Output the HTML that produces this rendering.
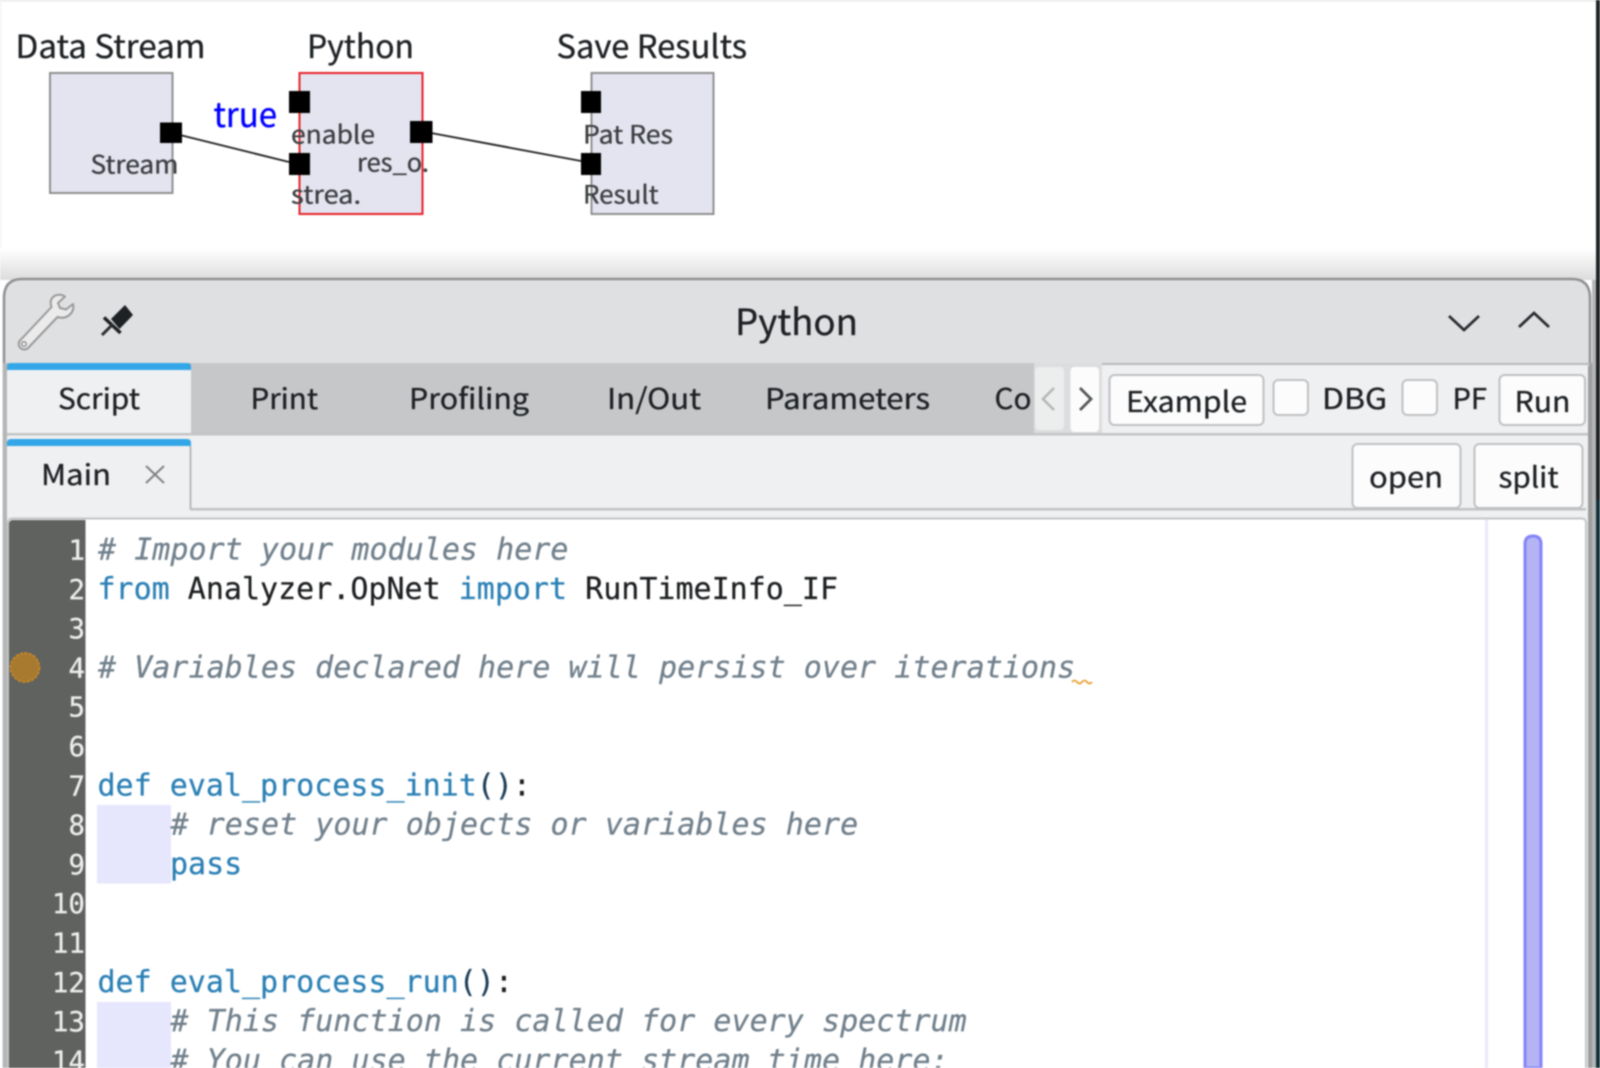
<!DOCTYPE html>
<html><head><meta charset="utf-8"><title>Python</title>
<style>
html,body{margin:0;padding:0;width:1600px;height:1068px;overflow:hidden;background:#fff}
svg{display:block;filter:blur(.75px)}
.u{font-family:"Noto Sans CJK JP","Liberation Sans",sans-serif;fill:#1f2225;stroke:#1f2225;stroke-width:.35px}
.m{font-family:"DejaVu Sans Mono","Liberation Mono",monospace;font-size:30px;white-space:pre;stroke-width:.25px}
.c{fill:#71808c;stroke:#71808c;font-style:italic;letter-spacing:.035px}
.k{fill:#2b80b5;stroke:#2b80b5}
.t{fill:#1d1f21;stroke:#1d1f21}
.n{font-family:"DejaVu Sans Mono","Liberation Mono",monospace;font-size:27.500px;fill:#eceeec;stroke:#eceeec;stroke-width:.25px;text-anchor:end}
.l{font-size:25px;fill:#3c3f42;stroke:#3c3f42}
.b{fill:#fcfcfc;stroke:#bfc1c3;stroke-width:2}
</style></head><body>
<svg width="1600" height="1068" viewBox="0 0 1600 1068" xmlns="http://www.w3.org/2000/svg">
<defs>
<linearGradient id="sh" x1="0" y1="0" x2="0" y2="1"><stop offset="0" stop-color="#fff"/><stop offset="1" stop-color="#dcdcdc"/></linearGradient>
<linearGradient id="ws" x1="0" y1="0" x2="1" y2="0"><stop offset="0" stop-color="#9c9c9c"/><stop offset="1" stop-color="#dfe0e2"/></linearGradient>
</defs>
<rect width="1600" height="1068" fill="#fff"/>
<rect width="1596" height="1.5" fill="#e8e8e8"/>
<rect width="1" height="278" fill="#eeeeee"/>
<rect x="0" y="248" width="1596" height="32" fill="url(#sh)"/>

<!-- graph -->
<text class="u" x="15.500" y="58" font-size="32" textLength="190" lengthAdjust="spacingAndGlyphs">Data Stream</text>
<text class="u" x="307" y="58" font-size="32" textLength="107" lengthAdjust="spacingAndGlyphs">Python</text>
<text class="u" x="556.500" y="58" font-size="32" textLength="190.500" lengthAdjust="spacingAndGlyphs">Save Results</text>
<rect x="50" y="73" width="122.500" height="120" fill="#e4e4f0" stroke="#8f8f8f" stroke-width="2"/>
<rect x="299.500" y="73" width="123" height="141" fill="#e4e4f0" stroke="#e8222a" stroke-width="2"/>
<rect x="591.500" y="73" width="122" height="141" fill="#e4e4f0" stroke="#8f8f8f" stroke-width="2"/>
<path d="M180 135L289 162M431 133L581 161" stroke="#222" stroke-width="1.900" fill="none"/>
<g fill="#000">
<rect x="160" y="122.500" width="22" height="20.500"/>
<rect x="289" y="91" width="21" height="22"/>
<rect x="289" y="153" width="21" height="22"/>
<rect x="410" y="121" width="22.500" height="22"/>
<rect x="581" y="91" width="20" height="22"/>
<rect x="581" y="153" width="20" height="22"/>
</g>
<text class="u" x="213.500" y="127" font-size="34" style="fill:#0000ff;stroke:#0000ff" textLength="63.500" lengthAdjust="spacingAndGlyphs">true</text>
<text class="u l" x="90.500" y="173.500" textLength="88" lengthAdjust="spacingAndGlyphs">Stream</text>
<text class="u l" x="291" y="143.500" textLength="84" lengthAdjust="spacingAndGlyphs">enable</text>
<text class="u l" x="357" y="171.500" textLength="72" lengthAdjust="spacingAndGlyphs">res_o.</text>
<text class="u l" x="291" y="203.500" textLength="70" lengthAdjust="spacingAndGlyphs">strea.</text>
<text class="u l" x="583" y="143.500" textLength="90" lengthAdjust="spacingAndGlyphs">Pat Res</text>
<text class="u l" x="583" y="203.500" textLength="75.500" lengthAdjust="spacingAndGlyphs">Result</text>

<!-- panel -->
<path d="M3 1068V298Q3 279 22 279H1572Q1591 279 1591 298V1068Z" fill="#eff0f1"/>
<path d="M4 363V298Q4 280 22 280H1572Q1590 280 1590 298V363Z" fill="#dfe0e2"/>
<path d="M4 1068V298Q4 279 22 279H1572Q1590 279 1590 298V1068" fill="none" stroke="#8f9192" stroke-width="2.500"/>
<rect x="3" y="363" width="4" height="705" fill="#b4b6b7"/>
<rect x="1588" y="363" width="4" height="705" fill="#9b9d9e"/>
<rect x="1592" y="280" width="4" height="788" fill="#b5b7b7"/>
<rect x="1596" y="0" width="4" height="500" fill="#1e2224"/>
<rect x="1596" y="500" width="4" height="568" fill="#123038"/>

<!-- wrench -->
<path d="M30 347H70" stroke="url(#ws)" stroke-width="3.500" fill="none"/>
<path d="M20.500 340L51.500 307C48.500 299 54 293.500 62 295L65 296.500L58 303L60 308L66 309.500L73 304C75 312.500 67 320 57.500 317L28 348A5 5 0 0 1 20.500 340Z" fill="#ebebeb" stroke="#9a9a9a" stroke-width="2" stroke-linejoin="round"/>
<circle cx="24" cy="344" r="2.200" fill="#fff" stroke="#8d8d8d" stroke-width="1.500"/>
<!-- pin -->
<path d="M125 305L133 315L119.500 329L111 319Z" fill="#1e2124"/>
<path d="M104 317.500L120.500 333" stroke="#1e2124" stroke-width="3.500" fill="none"/>
<path d="M113 324L102 335" stroke="#2a2d30" stroke-width="3" fill="none"/>

<text class="u" x="735" y="335" font-size="36" textLength="123" lengthAdjust="spacingAndGlyphs">Python</text>
<path d="M1449 316L1464 330L1479 316M1519 327L1534 313L1549 327" fill="none" stroke="#2a2d30" stroke-width="2.800"/>

<!-- tab bar -->
<rect x="7" y="363" width="1583" height="3" fill="#b6b8b9"/>
<rect x="191" y="363" width="843" height="70.500" fill="#c6c7c9"/>
<rect x="1034" y="363" width="68" height="71" fill="#dcdddf"/>
<rect x="1102" y="365" width="486" height="68" fill="#eff0f1"/>
<rect x="7" y="433" width="1581" height="2.500" fill="#c3c5c6"/>
<path d="M8 370V433H190.500V370Z" fill="#eff0f1"/>
<path d="M7 370V367Q7 363 11 363H187Q191 363 191 367V370Z" fill="#33a6e8"/>
<text class="u" x="58" y="409" font-size="28.500" textLength="82" lengthAdjust="spacingAndGlyphs">Script</text>
<text class="u" x="250.500" y="409" font-size="28.500" textLength="67.500" lengthAdjust="spacingAndGlyphs">Print</text>
<text class="u" x="409" y="409" font-size="28.500" textLength="120" lengthAdjust="spacingAndGlyphs">Profiling</text>
<text class="u" x="607" y="409" font-size="28.500" textLength="94" lengthAdjust="spacingAndGlyphs">In/Out</text>
<text class="u" x="765" y="409" font-size="28.500" textLength="165" lengthAdjust="spacingAndGlyphs">Parameters</text>
<text class="u" x="994.500" y="409" font-size="28.500" textLength="37" lengthAdjust="spacingAndGlyphs">Co</text>
<rect x="1035" y="367" width="29" height="63" rx="4" fill="#eceded"/>
<path d="M1054 388L1043 399L1054 410" fill="none" stroke="#b4b6b8" stroke-width="2.500"/>
<rect x="1070.500" y="367" width="28.500" height="65" rx="4" fill="#fcfcfc"/>
<path d="M1080 388L1091 399L1080 410" fill="none" stroke="#55585a" stroke-width="2.800"/>
<rect x="1109.500" y="375" width="154" height="50" rx="5" class="b"/>
<text class="u" x="1126" y="412" font-size="28.500" textLength="121" lengthAdjust="spacingAndGlyphs">Example</text>
<rect x="1273.500" y="380" width="34.500" height="35" rx="5" class="b"/>
<text class="u" x="1322" y="409" font-size="28.500" textLength="65" lengthAdjust="spacingAndGlyphs">DBG</text>
<rect x="1402.500" y="380" width="34.500" height="35" rx="5" class="b"/>
<text class="u" x="1452.500" y="409" font-size="28.500" textLength="34.500" lengthAdjust="spacingAndGlyphs">PF</text>
<rect x="1499.500" y="375" width="85.500" height="50" rx="5" class="b"/>
<text class="u" x="1514.500" y="412" font-size="28.500" textLength="56" lengthAdjust="spacingAndGlyphs">Run</text>

<!-- second row -->
<rect x="191" y="508" width="1395" height="2.500" fill="#c0c2c3"/>
<path d="M8 446V517H190V446Z" fill="#eff0f1"/>
<path d="M7 446V443Q7 439 11 439H187Q191 439 191 443V446Z" fill="#33a6e8"/>
<rect x="189.500" y="446" width="2" height="64" fill="#b8babc"/>
<text class="u" x="41" y="485" font-size="28.500" textLength="70" lengthAdjust="spacingAndGlyphs">Main</text>
<path d="M146 466L164 483M164 466L146 483" stroke="#808284" stroke-width="2" fill="none"/>
<rect x="1352.500" y="444" width="108" height="64" rx="5" class="b"/>
<text class="u" x="1369" y="487.500" font-size="28.500" textLength="74" lengthAdjust="spacingAndGlyphs">open</text>
<rect x="1474.500" y="444" width="108" height="64" rx="5" class="b"/>
<text class="u" x="1498.500" y="487.500" font-size="28.500" textLength="60" lengthAdjust="spacingAndGlyphs">split</text>

<!-- editor -->
<rect x="8" y="518.500" width="1578" height="560" rx="4" fill="#fff" stroke="#c3c5c6" stroke-width="2"/>
<path d="M9 1068V524Q9 520 13 520H85.500V1068Z" fill="#606260"/>
<rect x="1485" y="520" width="3" height="548" fill="#e8e8fc"/>
<path d="M1525 1068V544Q1525 536 1533 536Q1541 536 1541 544V1068Z" fill="#b4b4f4" stroke="#8484fa" stroke-width="3"/>
<rect x="97" y="805" width="74" height="78.500" fill="#e6e6fd"/>
<rect x="97" y="1002" width="74" height="66" fill="#e6e6fd"/>
<circle cx="25" cy="667.500" r="14.500" fill="#a87a30" stroke="#d48c1e" stroke-width="1.500" stroke-dasharray="3 1.500"/>

<text class="n" x="85" y="559.500">1</text>
<text class="n" x="85" y="598.800">2</text>
<text class="n" x="85" y="638.100">3</text>
<text class="n" x="85" y="677.400">4</text>
<text class="n" x="85" y="716.700">5</text>
<text class="n" x="85" y="756">6</text>
<text class="n" x="85" y="795.300">7</text>
<text class="n" x="85" y="834.600">8</text>
<text class="n" x="85" y="873.900">9</text>
<text class="n" x="85" y="913.200">10</text>
<text class="n" x="85" y="952.500">11</text>
<text class="n" x="85" y="991.800">12</text>
<text class="n" x="85" y="1031.100">13</text>
<text class="n" x="85" y="1070.400">14</text>

<text class="m c" x="98" y="559.500" xml:space="preserve"># Import your modules here</text>
<text class="m" x="97.500" y="598.800" xml:space="preserve"><tspan class="k">from</tspan><tspan class="t"> Analyzer.OpNet </tspan><tspan class="k">import</tspan><tspan class="t"> RunTimeInfo_IF</tspan></text>
<text class="m c" x="98" y="677.400" xml:space="preserve"># Variables declared here will persist over iterations</text>
<path d="M1072 682q2.500 -3 5 0t5 0t5 0t5 0" fill="none" stroke="#e8a33a" stroke-width="1.800"/>
<text class="m" x="97.500" y="795.300" xml:space="preserve"><tspan class="k">def eval_process_init</tspan><tspan fill="#1c3d58" stroke="#1c3d58">()</tspan><tspan class="t">:</tspan></text>
<text class="m c" x="170.500" y="834.600" xml:space="preserve"># reset your objects or variables here</text>
<text class="m k" x="170" y="873.900" xml:space="preserve">pass</text>
<text class="m" x="97.500" y="991.800" xml:space="preserve"><tspan class="k">def eval_process_run</tspan><tspan fill="#1c3d58" stroke="#1c3d58">()</tspan><tspan class="t">:</tspan></text>
<text class="m c" x="170.500" y="1031.100" xml:space="preserve"># This function is called for every spectrum</text>
<text class="m c" x="170.500" y="1070.400" xml:space="preserve"># You can use the current stream time here:</text>
</svg>
</body></html>
